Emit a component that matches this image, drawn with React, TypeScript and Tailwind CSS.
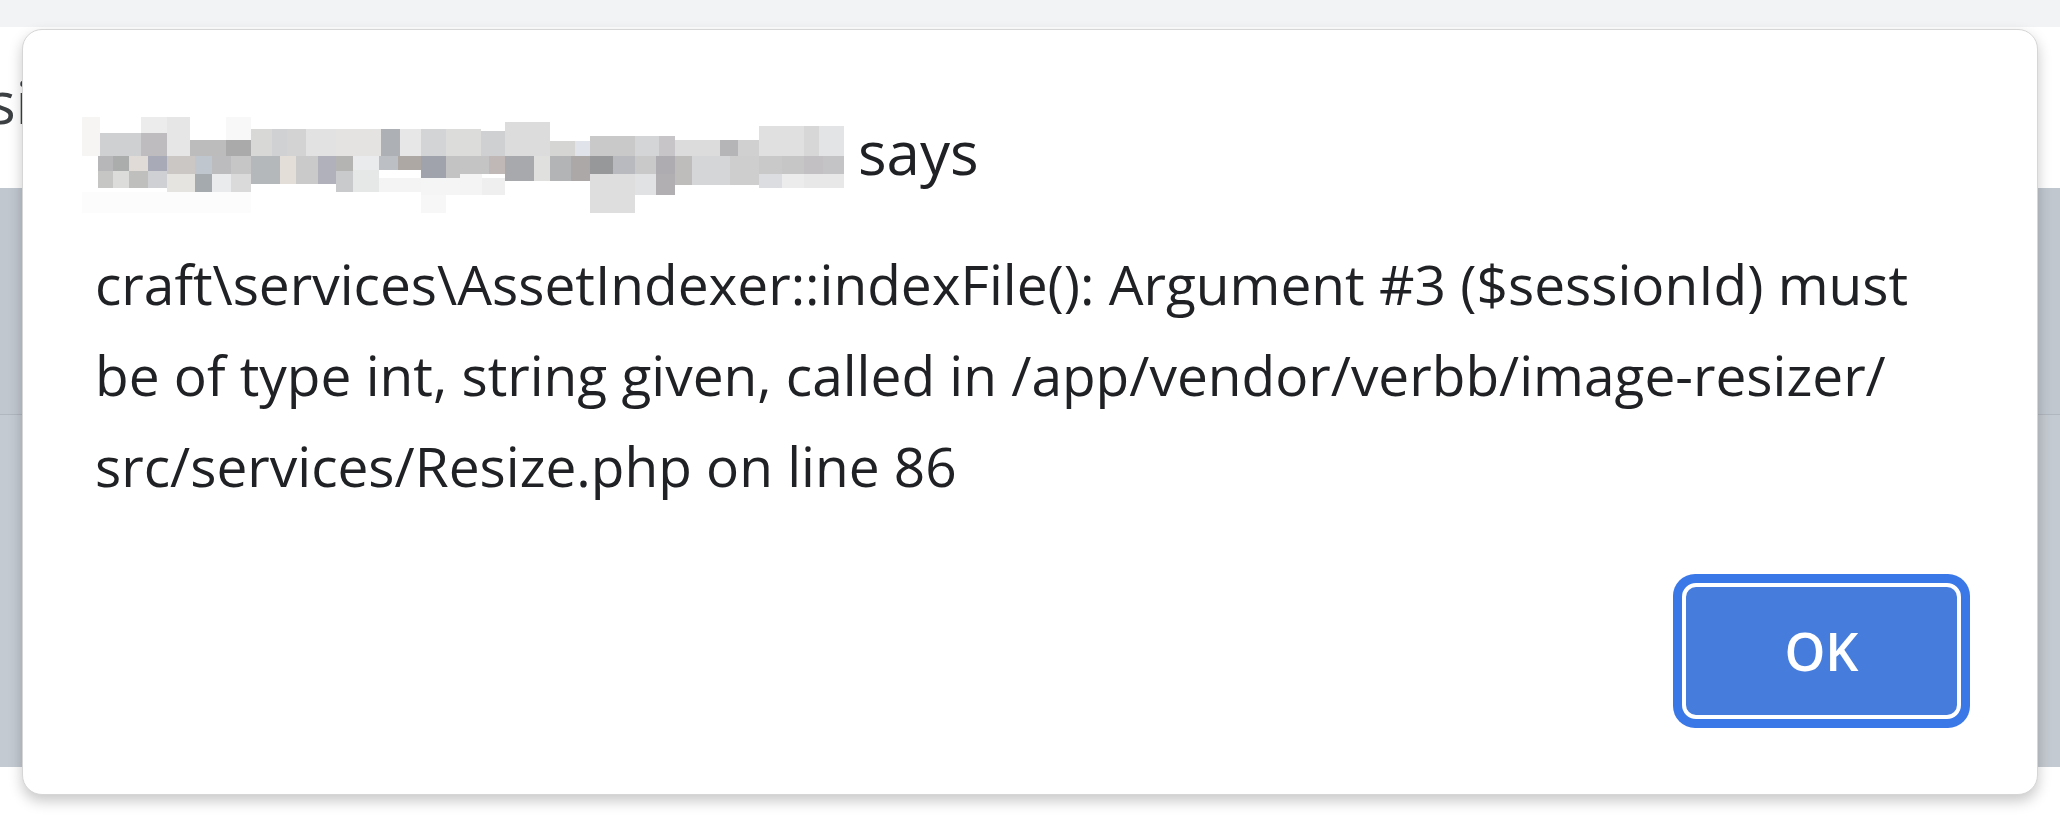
import React from "react";

// blurred (pixelated) host name, coordinates are page pixels
type Block = [number, number, number, number, string];

const blocks: Block[] = [
  [82, 117, 100, 156, "#f6f5f3"],
  [100, 133, 141, 156, "#cfd0d2"],
  [141, 117, 167, 133, "#ececec"],
  [141, 133, 167, 156, "#bfbcc0"],
  [167, 117, 190, 156, "#e6e6e6"],
  [190, 140, 226, 156, "#bbbcbb"],
  [226, 117, 251, 140, "#f8f8f8"],
  [226, 140, 251, 156, "#aaaaaa"],
  [251, 129, 272, 156, "#d8d8d6"],
  [272, 129, 287, 156, "#d0d1d3"],
  [287, 129, 306, 156, "#d3d3d3"],
  [306, 129, 336, 156, "#e2e2e2"],
  [336, 129, 381, 156, "#e4e3e1"],
  [381, 129, 400, 156, "#adb1b5"],
  [400, 129, 421, 156, "#e6e7e6"],
  [421, 129, 446, 156, "#d3d4d6"],
  [446, 129, 481, 156, "#dcdcda"],
  [82, 192, 251, 213, "#fcfcfc"],
  [421, 195, 446, 213, "#f7f7f7"],
  [98, 156, 113, 171, "#b7b7b9"],
  [113, 156, 129, 171, "#abadac"],
  [129, 156, 148, 171, "#e0dbd6"],
  [148, 156, 167, 171, "#a9aab8"],
  [167, 156, 195, 174, "#cbc7c4"],
  [195, 156, 212, 174, "#c0c6ce"],
  [212, 156, 231, 174, "#bcbcbe"],
  [231, 156, 251, 174, "#c6c6c6"],
  [251, 156, 280, 184, "#b4b8ba"],
  [280, 156, 296, 184, "#e3dfd8"],
  [296, 156, 318, 184, "#cacaca"],
  [318, 156, 336, 184, "#b1b1bc"],
  [336, 156, 353, 171, "#b4b4b2"],
  [353, 156, 379, 170, "#e9ebed"],
  [379, 156, 398, 170, "#bcc0c5"],
  [398, 156, 421, 170, "#aea8a5"],
  [421, 156, 446, 178, "#a0a2ac"],
  [446, 156, 460, 178, "#c3c3c3"],
  [98, 171, 113, 188, "#c6c6c4"],
  [113, 171, 129, 188, "#dcdcda"],
  [129, 171, 148, 188, "#bfbfbd"],
  [148, 171, 167, 188, "#cfd0d4"],
  [167, 174, 195, 192, "#e6e4e0"],
  [195, 174, 212, 192, "#a5aaae"],
  [212, 174, 231, 192, "#eaebed"],
  [231, 174, 251, 192, "#dadada"],
  [336, 171, 353, 192, "#c9cacc"],
  [353, 170, 379, 192, "#e6e8e7"],
  [379, 178, 398, 192, "#f3f4f3"],
  [398, 178, 421, 192, "#f4f4f4"],
  [421, 178, 468, 195, "#f5f5f5"],
  [481, 131, 505, 156, "#cfd0d2"],
  [505, 122, 550, 156, "#dcdcdc"],
  [550, 141, 575, 156, "#d5d5d3"],
  [575, 141, 590, 156, "#e0e4ea"],
  [590, 136, 635, 156, "#c9c9c9"],
  [635, 136, 659, 156, "#d4d5d7"],
  [659, 136, 675, 156, "#c7c5c7"],
  [675, 140, 720, 156, "#dcdcdc"],
  [720, 140, 738, 156, "#b5b5b7"],
  [738, 140, 759, 156, "#d0d0d0"],
  [759, 126, 804, 156, "#e0e0e0"],
  [804, 126, 819, 156, "#d7d7d7"],
  [819, 126, 844, 156, "#e3e4e6"],
  [460, 156, 489, 174, "#c4c4c4"],
  [489, 156, 505, 174, "#c0b8b6"],
  [505, 156, 534, 181, "#a8a9ad"],
  [534, 156, 550, 181, "#e0e0de"],
  [550, 156, 571, 181, "#b3b4b6"],
  [571, 156, 590, 181, "#aca8a7"],
  [590, 156, 613, 174, "#97989a"],
  [613, 156, 635, 174, "#b9babf"],
  [635, 156, 656, 174, "#c9c9c9"],
  [656, 156, 675, 174, "#aeacb1"],
  [675, 156, 692, 185, "#bfbdbb"],
  [692, 156, 730, 185, "#d5d6d8"],
  [730, 156, 759, 185, "#cecece"],
  [759, 156, 782, 174, "#c9c9c9"],
  [782, 156, 804, 174, "#c6c6c6"],
  [804, 156, 823, 174, "#c3c0c3"],
  [823, 156, 844, 174, "#c4c4c6"],
  [460, 174, 482, 195, "#f4f4f4"],
  [482, 178, 505, 195, "#efefef"],
  [590, 174, 635, 213, "#dedede"],
  [635, 174, 656, 195, "#e1e2e4"],
  [656, 174, 675, 195, "#b1afb1"],
  [759, 174, 782, 188, "#dcdde0"],
  [782, 174, 804, 188, "#ececec"],
  [804, 174, 844, 188, "#e8e8e8"],
];

const BlurredHost: React.FC = () => (
  <svg
    width={762}
    height={113}
    viewBox="82 100 762 113"
    shapeRendering="crispEdges"
    className="shrink-0 -ml-[13px]"
  >
    {blocks.map(([x1, y1, x2, y2, c], i) => (
      <rect key={i} x={x1} y={y1} width={x2 - x1} height={y2 - y1} fill={c} />
    ))}
  </svg>
);

const lines = [
  "craft\\services\\AssetIndexer::indexFile(): Argument #3 ($sessionId) must",
  "be of type int, string given, called in /app/vendor/verbb/image-resizer/",
  "src/services/Resize.php on line 86",
];

export default function App() {
  return (
    <div className="relative w-[2060px] h-[820px] overflow-hidden bg-white font-['Open_Sans',sans-serif]">
      {/* page behind the alert */}
      <div className="h-[27px] bg-[#f1f3f4]" />
      <div className="h-[161px] bg-white pt-[46px] text-[58px] leading-none text-[#3c4043] -ml-[12px]">
        si
      </div>
      <div className="h-[227px] bg-[#c1c7cf] border-b border-[#b1b7bf]" />
      <div className="h-[352px] bg-[#c4cad1]" />
      <div className="h-[53px] bg-white" />

      {/* alert dialog */}
      <div className="absolute left-[22px] top-[29px] w-[2016px] h-[766px] rounded-[20px] bg-white border border-[#d6d6d6] shadow-[0_6px_14px_rgba(0,0,0,0.22)] pl-[72px] pr-[67px] pt-[70px] text-[#202124]">
        <div className="flex items-start h-[113px]">
          <BlurredHost />
          <span className="ml-[14px] mt-[22px] text-[60px] leading-none">says</span>
        </div>

        <div className="mt-[25px] text-[55px] leading-[91px] whitespace-nowrap">
          {lines.map((l, i) => (
            <div key={i}>{l}</div>
          ))}
        </div>

        <div className="flex justify-end mt-[63px]">
          <div className="w-[297px] h-[154px] p-[9px] rounded-[22px] bg-[#3b78e7]">
            <button className="w-full h-full rounded-[14px] border-4 border-white bg-[#467ddd] text-white text-[52px] font-semibold leading-none">
              OK
            </button>
          </div>
        </div>
      </div>
    </div>
  );
}
